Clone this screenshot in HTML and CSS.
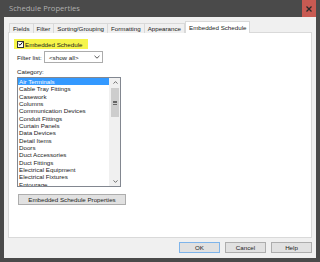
FILE: index.html
```html
<!DOCTYPE html>
<html>
<head>
<meta charset="utf-8">
<link rel="stylesheet" href="styles.css">
</head>
<body>
<div class="window">
  <div class="titlebar">
    <span class="title">Schedule Properties</span>
    <span class="close"><svg width="6" height="6" viewBox="0 0 6 6"><path d="M0.5 0.5L5.5 5.5M5.5 0.5L0.5 5.5" stroke="#2a2a2a" stroke-width="1.3"/></svg></span>
  </div>
  <div class="client">
    <div class="tabs">
      <div class="tab">Fields</div>
      <div class="tab">Filter</div>
      <div class="tab">Sorting/Grouping</div>
      <div class="tab">Formatting</div>
      <div class="tab">Appearance</div>
      <div class="tab active">Embedded Schedule</div>
    </div>
    <div class="panel">
      <div class="check-row">
        <span class="checkbox"><svg width="6" height="6" viewBox="0 0 6 6"><path d="M0.8 3L2.4 4.6L5.3 1" fill="none" stroke="#111" stroke-width="1.2"/></svg></span>
        <span>Embedded Schedule</span>
      </div>
      <div class="filter-row">
        <span class="label">Filter list:</span>
        <div class="select"><span>&lt;show all&gt;</span><svg width="6" height="4" viewBox="0 0 6 4"><path d="M0.5 0.8L3 3.2L5.5 0.8" fill="none" stroke="#444" stroke-width="0.9"/></svg></div>
      </div>
      <div class="label cat">Category:</div>
      <div class="listbox">
        <div class="items">
          <div class="item sel">Air Terminals</div>
          <div class="item">Cable Tray Fittings</div>
          <div class="item">Casework</div>
          <div class="item">Columns</div>
          <div class="item">Communication Devices</div>
          <div class="item">Conduit Fittings</div>
          <div class="item">Curtain Panels</div>
          <div class="item">Data Devices</div>
          <div class="item">Detail Items</div>
          <div class="item">Doors</div>
          <div class="item">Duct Accessories</div>
          <div class="item">Duct Fittings</div>
          <div class="item">Electrical Equipment</div>
          <div class="item">Electrical Fixtures</div>
          <div class="item last">Entourage</div>
        </div>
        <div class="scrollbar">
          <div class="arrow"><svg width="5" height="3" viewBox="0 0 5 3"><path d="M0.5 2.6L2.5 0.6L4.5 2.6" fill="none" stroke="#606060" stroke-width="0.9"/></svg></div>
          <div class="track">
            <div class="thumb"><span class="grip"></span></div>
          </div>
          <div class="arrow"><svg width="5" height="3" viewBox="0 0 5 3"><path d="M0.5 0.4L2.5 2.4L4.5 0.4" fill="none" stroke="#606060" stroke-width="0.9"/></svg></div>
        </div>
      </div>
      <div class="btn wide">Embedded Schedule Properties</div>
    </div>
    <div class="buttons">
      <div class="btn default">OK</div>
      <div class="btn">Cancel</div>
      <div class="btn">Help</div>
    </div>
  </div>
</div>
</body>
</html>
```
FILE: styles.css
```css
* { box-sizing: border-box; }
html, body { margin: 0; padding: 0; }
body {
  width: 320px;
  height: 262px;
  background: #4a4a4a;
  font-family: "Liberation Sans", Arial, sans-serif;
  font-size: 6.2px;
  color: #1a1a1a;
  overflow: hidden;
}
.window {
  display: flex;
  flex-direction: column;
  height: 262px;
}
.titlebar {
  height: 17px;
  display: flex;
  align-items: flex-start;
  justify-content: space-between;
  padding-left: 9px;
  padding-right: 4px;
}
.title {
  color: #b0b0b0;
  font-family: "Open Sans", "Noto Sans", sans-serif;
  font-size: 7.6px;
  line-height: 17px;
}
.close {
  width: 14px;
  height: 17px;
  background: #c85a52;
  display: flex;
  align-items: center;
  justify-content: center;
}
.client {
  flex: 1;
  margin: 0 4px 4px 4px;
  background: #f0f0f0;
  padding: 4px 4px 0 4px;
  display: flex;
  flex-direction: column;
}
.tabs {
  display: flex;
  align-items: flex-end;
  height: 12px;
  padding-left: 1px;
  margin-bottom: -1px;
  position: relative;
  z-index: 1;
}
.tab {
  height: 10px;
  line-height: 9px;
  padding: 0 3px;
  border: 1px solid #d9d9d9;
  border-bottom: none;
  border-right: none;
  background: #f0f0f0;
  color: #222;
  white-space: nowrap;
}
.tab:nth-child(5) { border-right: 1px solid #d9d9d9; }
.tab.active {
  height: 12px;
  line-height: 11px;
  background: #fff;
  border: 1px solid #d9d9d9;
  border-bottom: none;
  padding: 0 3px 0 3px;
}
.panel {
  height: 206px;
  background: #fff;
  border: 1px solid #d9d9d9;
  padding: 6px 0 0 8px;
  display: flex;
  flex-direction: column;
  align-items: flex-start;
}
.check-row {
  height: 10px;
  margin-left: -3px;
  padding: 0 6px 0 3px;
  background: #f6f54a;
  display: flex;
  align-items: center;
  gap: 1px;
}
.checkbox {
  width: 7px;
  height: 7px;
  border: 1px solid #333;
  background: #fff;
  display: flex;
  align-items: center;
  justify-content: center;
}
.filter-row {
  margin-top: 2px;
  display: flex;
  align-items: center;
  height: 12px;
}
.label { color: #222; }
.filter-row .label { width: 27px; }
.select {
  width: 59px;
  height: 12px;
  border: 1px solid #acacac;
  background: #fff;
  display: flex;
  align-items: center;
  justify-content: space-between;
  padding: 0 2px 0 4px;
}
.cat {
  margin-top: 4px;
  line-height: 9px;
  height: 9px;
}
.listbox {
  margin-top: 1px;
  width: 104px;
  height: 110px;
  border: 1px solid #828790;
  display: flex;
  overflow: hidden;
  background: #fff;
}
.items {
  flex: 1;
  overflow: hidden;
}
.item {
  height: 7.33px;
  line-height: 7.33px;
  padding-left: 1px;
  white-space: nowrap;
}
.item.sel {
  background: #3399ff;
  color: #fff;
}
.scrollbar {
  width: 11px;
  display: flex;
  flex-direction: column;
  background: #f0f0f0;
  border-left: 1px solid #f0f0f0;
}
.arrow {
  height: 9px;
  display: flex;
  align-items: center;
  justify-content: center;
  background: #f0f0f0;
}
.track {
  flex: 1;
  padding: 1px;
}
.thumb {
  height: 29px;
  background: #cdcdcd;
  display: flex;
  align-items: center;
  justify-content: center;
}
.grip {
  width: 4px;
  height: 4px;
  border-top: 1px solid #666;
  border-bottom: 1px solid #666;
  background: linear-gradient(#cdcdcd 0, #cdcdcd 0.5px, #666 0.5px, #666 1.5px, #cdcdcd 1.5px);
}
.btn {
  height: 11px;
  width: 41px;
  background: #e1e1e1;
  border: 1px solid #adadad;
  display: flex;
  align-items: center;
  justify-content: center;
  color: #222;
  white-space: nowrap;
}
.btn.wide {
  width: 108px;
  margin-top: 7px;
  margin-left: 1px;
}
.btn.default {
  border-color: #7eb4ea;
}
.buttons {
  display: flex;
  justify-content: flex-end;
  gap: 5px;
  margin-top: 4px;
}
```
